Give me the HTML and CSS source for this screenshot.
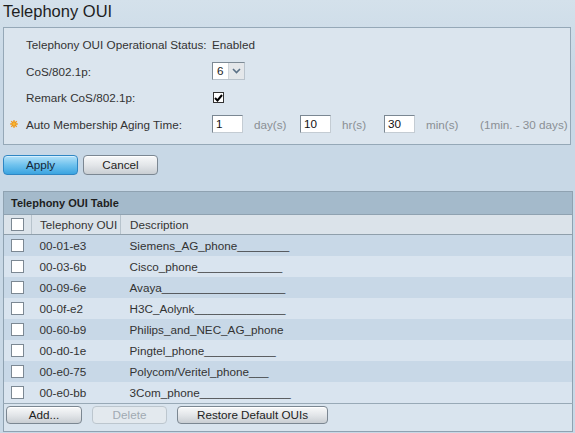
FILE: index.html
```html
<!DOCTYPE html>
<html lang="en">
<head>
    <meta charset="UTF-8">
    <meta name="viewport" content="width=device-width, initial-scale=1.0">
    <title>Telephony OUI</title>
    <link rel="stylesheet" href="styles.css">
</head>
<body>
    <h1 class="page-title">Telephony OUI</h1>

    <div class="settings">
        <span class="mark"></span>
        <span class="label">Telephony OUI Operational Status:</span>
        <span class="value">Enabled</span>

        <span class="mark"></span>
        <span class="label">CoS/802.1p:</span>
        <span class="value">
            <span class="select">
                <span class="select-text">6</span>
                <span class="select-btn">
                    <svg width="9" height="6" viewBox="0 0 9 6"><path d="M1 1 L4.5 4.5 L8 1" fill="none" stroke="#5b7186" stroke-width="1.6"/></svg>
                </span>
            </span>
        </span>

        <span class="mark"></span>
        <span class="label">Remark CoS/802.1p:</span>
        <span class="value">
            <span class="check">
                <svg width="9" height="8" viewBox="0 0 9 8"><path d="M1 4 L3.5 6.5 L8 1" fill="none" stroke="#000" stroke-width="2"/></svg>
            </span>
        </span>

        <span class="mark">
            <svg width="8" height="8" viewBox="0 0 8 8">
                <g stroke="#f29a1c" stroke-width="1.2">
                    <line x1="4" y1="0" x2="4" y2="8"/>
                    <line x1="0" y1="4" x2="8" y2="4"/>
                    <line x1="1.2" y1="1.2" x2="6.8" y2="6.8"/>
                    <line x1="6.8" y1="1.2" x2="1.2" y2="6.8"/>
                </g>
                <circle cx="4" cy="4" r="2.2" fill="#f7b733" stroke="#e98a10" stroke-width="0.8"/>
            </svg>
        </span>
        <span class="label">Auto Membership Aging Time:</span>
        <span class="value">
            <span class="text-input">1</span>
            <span class="unit unit-day">day(s)</span>
            <span class="text-input">10</span>
            <span class="unit unit-hr">hr(s)</span>
            <span class="text-input">30</span>
            <span class="unit unit-min">min(s)</span>
            <span class="unit">(1min. - 30 days)</span>
        </span>
    </div>

    <div class="actions">
        <button class="btn btn-primary">Apply</button>
        <button class="btn">Cancel</button>
    </div>

    <table class="oui-table">
        <tr class="table-title">
            <th colspan="3">Telephony OUI Table</th>
        </tr>
        <tr class="col-head">
            <td class="col-check"><span class="box"></span></td>
            <td class="col-oui">Telephony OUI</td>
            <td class="col-desc">Description</td>
        </tr>
        <tr class="odd">
            <td class="col-check"><span class="box"></span></td>
            <td>00-01-e3</td>
            <td class="col-desc">Siemens_AG_phone________</td>
        </tr>
        <tr>
            <td class="col-check"><span class="box"></span></td>
            <td>00-03-6b</td>
            <td class="col-desc">Cisco_phone_____________</td>
        </tr>
        <tr class="odd">
            <td class="col-check"><span class="box"></span></td>
            <td>00-09-6e</td>
            <td class="col-desc">Avaya___________________</td>
        </tr>
        <tr>
            <td class="col-check"><span class="box"></span></td>
            <td>00-0f-e2</td>
            <td class="col-desc">H3C_Aolynk______________</td>
        </tr>
        <tr class="odd">
            <td class="col-check"><span class="box"></span></td>
            <td>00-60-b9</td>
            <td class="col-desc">Philips_and_NEC_AG_phone</td>
        </tr>
        <tr>
            <td class="col-check"><span class="box"></span></td>
            <td>00-d0-1e</td>
            <td class="col-desc">Pingtel_phone___________</td>
        </tr>
        <tr class="odd">
            <td class="col-check"><span class="box"></span></td>
            <td>00-e0-75</td>
            <td class="col-desc">Polycom/Veritel_phone___</td>
        </tr>
        <tr>
            <td class="col-check"><span class="box"></span></td>
            <td>00-e0-bb</td>
            <td class="col-desc">3Com_phone______________</td>
        </tr>
        <tr class="table-foot">
            <td colspan="3">
                <div class="foot-buttons">
                    <button class="btn btn-add">Add...</button>
                    <button class="btn btn-delete" disabled>Delete</button>
                    <button class="btn btn-restore">Restore Default OUIs</button>
                </div>
            </td>
        </tr>
    </table>
</body>
</html>
```

FILE: styles.css
```css
body {
    margin: 0;
    font-family: "Liberation Sans", Arial, sans-serif;
    font-size: 11.7px;
    color: #333;
    background: linear-gradient(#d4e1eb, #c8d8e6 70px, #c8d8e6);
    height: 433px;
    overflow: hidden;
}

.page-title {
    margin: 0;
    padding: 0 3px 5px;
    font-size: 16.5px;
    line-height: 22px;
    font-weight: normal;
    color: #1e1e1e;
}

.settings {
    margin: 0 0 0 3px;
    width: 560px;
    padding: 3px 0 6px 6px;
    border: 1px solid #95a8b7;
    background: #dbe5ee;
    display: grid;
    grid-template-columns: 16px 186px 1fr;
    grid-auto-rows: 26.7px;
    align-items: center;
}

.mark {
    display: flex;
    align-items: center;
}

.value {
    display: flex;
    align-items: center;
}

.select {
    display: flex;
    width: 31px;
    height: 16px;
    border: 1px solid #b9c3cc;
    border-top-color: #7d8a95;
    border-left-color: #7d8a95;
    background: #fff;
}

.select-text {
    flex: 1;
    padding-left: 4px;
    line-height: 16px;
    color: #222;
}

.select-btn {
    width: 15px;
    display: flex;
    align-items: center;
    justify-content: center;
    background: #e4e7ea;
    border-left: 1px solid #cfd5da;
}

.check {
    width: 9px;
    height: 9px;
    margin-left: 1px;
    border: 1px solid #333;
    background: #fff;
    display: flex;
    align-items: center;
    justify-content: center;
}

.text-input {
    flex: none;
    width: 26px;
    height: 16px;
    padding-left: 3px;
    line-height: 16px;
    border: 1px solid #c4ccd3;
    border-top-color: #7a8792;
    border-left-color: #7a8792;
    background: #fff;
    color: #111;
}

.unit {
    flex: none;
    color: #8a8f94;
    margin-left: 11px;
}

.unit-day { width: 46px; }
.unit-hr { width: 42px; }
.unit-min { width: 43px; }

.actions {
    display: flex;
    gap: 5px;
    margin: 10px 0 0 3px;
}

.btn {
    font-family: "Liberation Sans", Arial, sans-serif;
    font-size: 11.7px;
    color: #222;
    width: 75px;
    height: 20px;
    padding: 0;
    border: 1px solid #7b8792;
    border-radius: 4px;
    background: linear-gradient(#f8f9fa, #e3e6e9 50%, #c9ced3);
    box-shadow: inset 0 1px 0 #fff;
}

.btn-primary {
    border-color: #2f86c3;
    background: linear-gradient(#b3e1f8, #6fc2ee 50%, #3ba4e0);
    box-shadow: inset 0 1px 0 #d4efff;
    color: #14283a;
}

.oui-table {
    margin: 16px 0 0 3px;
    width: 570px;
    border-collapse: collapse;
    border: 1px solid #8fa2b1;
}

.oui-table td {
    height: 21px;
    padding: 0 0 0 8px;
    white-space: nowrap;
}

.table-title th {
    height: 22px;
    padding: 0 0 0 7px;
    text-align: left;
    font-size: 11px;
    font-weight: bold;
    color: #1e1e1e;
    background: #a4bacb;
    border-bottom: 1px solid #8fa2b1;
}

.col-head td {
    height: 19px;
    background: #dbe3ea;
    color: #333;
    border-bottom: 1px solid #8f9fab;
}

.col-head td + td {
    border-left: 1px solid #b7c3cc;
}

.oui-table .col-check {
    width: 20px;
    padding-left: 7px;
}

.col-oui {
    width: 80px;
}

.oui-table .col-desc {
    padding-left: 9px;
}

.box {
    display: block;
    width: 11px;
    height: 11px;
    border: 1px solid #7c8893;
    background: #fff;
}

.oui-table tr {
    background: #d9e4ef;
}

.oui-table tr.odd {
    background: #c8d8e7;
}

.oui-table .table-foot td {
    height: 25px;
    padding: 2px 0 0 2px;
    vertical-align: top;
    border-top: 1px solid #98a9b6;
    background: #d9e4ee;
}

.foot-buttons {
    display: flex;
    gap: 10px;
}

.btn-add {
    width: 76px;
    height: 18px;
}

.btn-delete {
    width: 75px;
    height: 18px;
    color: #a0aab2;
    border-color: #bcc6ce;
    background: #e3e9ee;
    box-shadow: none;
}

.btn-restore {
    width: 151px;
    height: 18px;
}
```
